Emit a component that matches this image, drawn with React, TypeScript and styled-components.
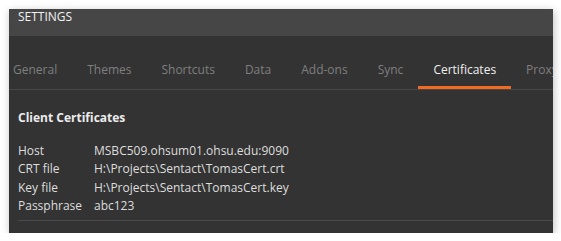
import React from 'react'
import styled, { createGlobalStyle } from 'styled-components'

const GlobalStyle = createGlobalStyle`
  * {
    box-sizing: border-box;
  }

  body {
    margin: 0;
    background: #fff;
    font-family: 'Open Sans', 'Noto Sans', sans-serif;
  }
`

const tabs = ['General', 'Themes', 'Shortcuts', 'Data', 'Add-ons', 'Sync', 'Certificates', 'Proxy']

const certificate = [
  { label: 'Host', value: 'MSBC509.ohsum01.ohsu.edu:9090' },
  { label: 'CRT file', value: 'H:\\Projects\\Sentact\\TomasCert.crt' },
  { label: 'Key file', value: 'H:\\Projects\\Sentact\\TomasCert.key' },
  { label: 'Passphrase', value: 'abc123' }
]

export default function App() {
  return (
    <>
      <GlobalStyle />
      <StyledPage>
        <StyledModal>
          <StyledHeader>SETTINGS</StyledHeader>
          <StyledTabBar>
            {tabs.map((tab) => (
              <StyledTab key={tab} active={tab === 'Certificates'}>
                {tab}
              </StyledTab>
            ))}
          </StyledTabBar>
          <StyledContent>
            <StyledTitle>Client Certificates</StyledTitle>
            <StyledList>
              {certificate.map(({ label, value }) => (
                <StyledRow key={label}>
                  <StyledLabel>{label}</StyledLabel>
                  <StyledValue>{value}</StyledValue>
                </StyledRow>
              ))}
            </StyledList>
            <StyledDivider />
          </StyledContent>
        </StyledModal>
      </StyledPage>
    </>
  )
}

const StyledPage = styled.div`
  padding: 9px 0 0 9px;
`

const StyledModal = styled.div`
  width: 544px;
  height: 224px;
  background: #333333;
  overflow: hidden;
  box-shadow: 1px 2px 8px rgba(0, 0, 0, 0.25);
`

const StyledHeader = styled.div`
  height: 27px;
  padding: 0 9px;
  background: #464646;
  color: #f2f2f2;
  font-size: 12px;
  line-height: 15px;
`

const StyledTabBar = styled.div`
  display: flex;
  align-items: flex-end;
  height: 54px;
  margin-left: -11px;
  border-bottom: 1px solid #474747;
  white-space: nowrap;
`

const StyledTab = styled.div<{ active: boolean }>`
  flex: none;
  padding: 0 15px 8px;
  font-size: 12px;
  line-height: 16px;
  color: ${({ active }) => (active ? '#f0f0f0' : '#7f7f7f')};
  font-weight: ${({ active }) => (active ? 500 : 400)};
  border-bottom: 3px solid ${({ active }) => (active ? '#f26b21' : 'transparent')};
`

const StyledContent = styled.div`
  padding: 20px 0 0 9px;
`

const StyledTitle = styled.div`
  font-size: 12px;
  line-height: 16px;
  font-weight: 700;
  color: #ececec;
  margin-bottom: 16px;
`

const StyledList = styled.div`
  display: flex;
  flex-direction: column;
`

const StyledRow = styled.div`
  display: flex;
  font-size: 12px;
  line-height: 18.3px;
  color: #dedede;
`

const StyledLabel = styled.div`
  width: 76px;
  flex: none;
`

const StyledValue = styled.div`
  flex: 1;
`

const StyledDivider = styled.div`
  margin-top: 5px;
  height: 1px;
  background: #4a4a4a;
`
